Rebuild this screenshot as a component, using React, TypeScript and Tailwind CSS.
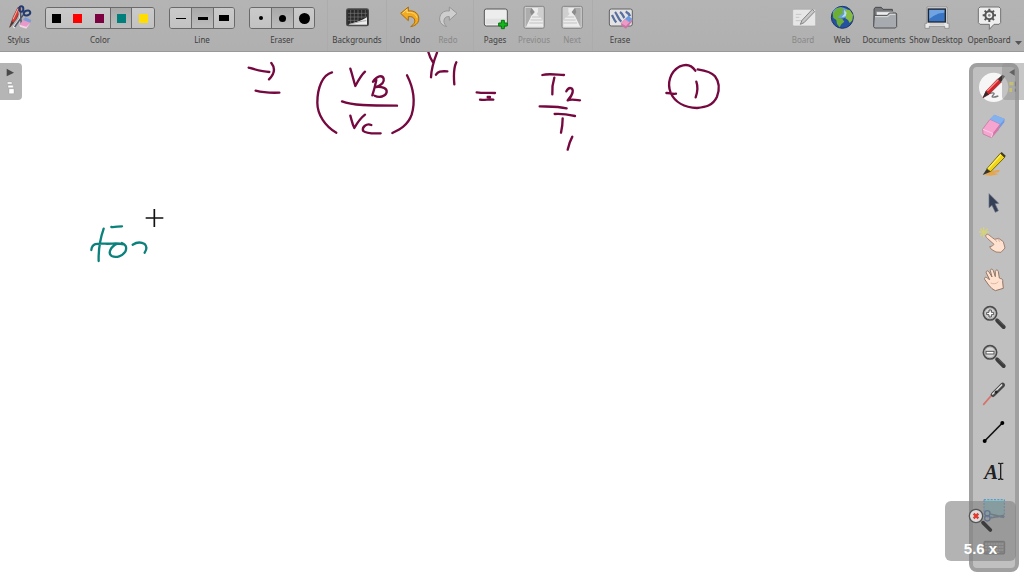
import React from 'react';

interface ToolButtonProps {
  label: string;
  width: string;
  disabled?: boolean;
  children: React.ReactNode;
}

const ToolButton: React.FC<ToolButtonProps> = ({ label, width, disabled, children }) => (
  <button
    type="button"
    disabled={disabled}
    className={`flex shrink-0 flex-col items-center gap-1 pt-1.5 ${width} ${disabled ? 'text-[#888888]' : 'text-[#404040]'}`}
  >
    <svg viewBox="0 0 84 72" className="h-6 w-7 overflow-visible" aria-hidden="true">
      {children}
    </svg>
    <span className="whitespace-nowrap text-[8px] leading-3">{label}</span>
  </button>
);

interface Choice {
  name: string;
  mark: string;
}

interface ChoiceGroupProps {
  label: string;
  choices: Choice[];
  selected: number;
  divided?: boolean;
}

const ChoiceGroup: React.FC<ChoiceGroupProps> = ({ label, choices, selected, divided = true }) => (
  <div role="group" aria-label={label} className="flex shrink-0 flex-col items-center pt-[7px] text-[#404040]">
    <div className="flex h-[22px] overflow-hidden rounded-[3px] border border-[#6a6a6a]">
      {choices.map((choice, idx) => (
        <button
          key={choice.name}
          type="button"
          aria-label={choice.name}
          aria-pressed={idx === selected}
          className={`flex items-center justify-center border-[#6a6a6a] ${divided ? 'w-5 not-last:w-[22px] not-last:border-r' : 'w-[22px] first:w-5'} ${
            idx === selected ? 'bg-linear-to-b from-[#a9a9a9] to-[#bcbcbc]' : 'bg-linear-to-b from-[#cacaca] to-[#c2c2c2]'
          } ${!divided && idx === selected ? 'border-x' : ''}`}
        >
          <span className={choice.mark} />
        </button>
      ))}
    </div>
    <span className="mt-[5px] text-[8px] leading-3">{label}</span>
  </div>
);

const colors: Choice[] = [
  { name: 'Black', mark: 'size-[9px] bg-black' },
  { name: 'Red', mark: 'size-[9px] bg-[#ff0000]' },
  { name: 'Purple', mark: 'size-[9px] bg-[#7d0041]' },
  { name: 'Teal', mark: 'size-[9px] bg-[#007f7c]' },
  { name: 'Yellow', mark: 'size-[9px] bg-[#ffdd00]' },
];

const lines: Choice[] = [
  { name: 'Fine line', mark: 'h-px w-2.5 bg-black' },
  { name: 'Medium line', mark: 'h-[3px] w-2.5 bg-black' },
  { name: 'Strong line', mark: 'h-1.5 w-2.5 bg-black' },
];

const erasers: Choice[] = [
  { name: 'Small eraser', mark: 'size-1 rounded-full bg-black' },
  { name: 'Medium eraser', mark: 'size-[7px] rounded-full bg-black' },
  { name: 'Large eraser', mark: 'size-[11px] rounded-full bg-black' },
];

const Separator = () => <div className="h-full w-px shrink-0 bg-[#acacac]" />;

const PageStairs = () => (
  <>
    <rect x="12" y="1" width="61" height="66" rx="5" fill="#cfcfcf" stroke="#858585" strokeWidth="3" />
    <path d="M36 6H54V18L50 24 69 42V62H18L34 30 44 19Z" fill="#ececec" />
    <path d="M17 6H34L43 18 34 29 18 62H17Z" fill="#adadad" />
    <path d="M34 6 44 18 35 28 30 18Z" fill="#8c8c8c" />
    <path d="M36 33H60M32 42H68M28 51H69" stroke="#c2c2c2" strokeWidth="3" />
  </>
);

const Toolbar = () => (
  <header className="z-10 flex h-[52px] shrink-0 items-stretch border-b border-[#999] bg-linear-to-b from-[#b4b4b4] to-[#b0b0b0]">
    <ToolButton label="Stylus" width="w-[37px]">
      <path d="M14 64 25 32 39 4 48 8 34 39Z" fill="#d93a32" stroke="#6b2d2c" strokeWidth="2" />
      <path d="M24 40 39 8" stroke="#f7b5ab" strokeWidth="3" />
      <path d="M14 64 20 46 27 50Z" fill="#483b3a" />
      <path d="M26 65 53 28M48 58 44 15" stroke="#eee" strokeWidth="7" />
      <path d="M29 63 55 26M49 57 46 17" stroke="#505868" strokeWidth="5" />
      <ellipse cx="49" cy="9" rx="6" ry="8" fill="none" stroke="#243b70" strokeWidth="6" />
      <ellipse cx="66" cy="21" rx="10" ry="7" fill="none" stroke="#243b70" strokeWidth="6" transform="rotate(-20 66 21)" />
      <path d="M43 56 55 42 76 50 64 67Z" fill="#e79ac9" />
      <path d="M54 42 61 34 79 42 76 50Z" fill="#7e9bd8" />
      <path d="M43 56 64 62 76 50 64 68 45 62Z" fill="#f4d5e7" />
    </ToolButton>
    <div className="ml-2 flex gap-3.5">
      <ChoiceGroup label="Color" choices={colors} selected={3} divided={false} />
      <ChoiceGroup label="Line" choices={lines} selected={1} />
      <ChoiceGroup label="Eraser" choices={erasers} selected={1} />
    </div>
    <div className="ml-3 flex">
      <Separator />
      <ToolButton label="Backgrounds" width="w-[58px]">
        <rect x="11" y="9" width="65" height="50" rx="5" fill="#292929" stroke="#4b4b4b" strokeWidth="4" />
        <path d="M23 12V52M34 12V49M45 12V44M56 12V38M67 12V32M15 22H72M15 33H72M15 43H46" stroke="#777" strokeWidth="2" />
        <path d="M15 56C32 51 54 46 72 34V56Z" fill="#eee" />
        <path d="M18 55C40 50 55 45 70 44" fill="none" stroke="#aaa" strokeWidth="3" />
      </ToolButton>
      <Separator />
    </div>
    <div className="ml-1 flex">
      <ToolButton label="Undo" width="w-[38px]">
        <path d="M14 22 37 3V15C57 12 71 25 68 43 66 53 57 60 44 62 55 54 59 47 55 39 52 33 46 31 37 32V44Z" fill="#f4aa20" stroke="#a76c0b" strokeWidth="3" strokeLinejoin="round" />
        <path d="M20 22 33 10V20C47 17 60 23 63 35" fill="none" stroke="#ffdc79" strokeWidth="3" />
      </ToolButton>
      <ToolButton label="Redo" width="w-[38px]" disabled>
        <path d="M69 22 46 3V15C28 12 15 25 17 42 19 53 27 59 38 62 30 53 28 47 31 39 34 33 39 31 46 32V43Z" fill="#cecece" stroke="#969696" strokeWidth="3" strokeLinejoin="round" />
      </ToolButton>
    </div>
    <div className="ml-1.5 flex">
      <Separator />
      <ToolButton label="Pages" width="w-[42px]">
        <rect x="10" y="9" width="69" height="51" rx="6" fill="#ededed" stroke="#565656" strokeWidth="3" />
        <path d="M14 38H75V54H14Z" fill="#e0e0e0" />
        <path d="M61 43H70V51H79V60H70V68H61V60H53V51H61Z" fill="#14b51d" stroke="#08740e" strokeWidth="3" strokeLinejoin="round" />
      </ToolButton>
      <ToolButton label="Previous" width="w-9" disabled>
        <PageStairs />
      </ToolButton>
      <ToolButton label="Next" width="w-10" disabled>
        <g transform="translate(85 0) scale(-1 1)">
          <PageStairs />
        </g>
      </ToolButton>
      <Separator />
      <ToolButton label="Erase" width="w-[54px]">
        <rect x="10" y="9" width="69" height="51" rx="6" fill="#e3e3e3" stroke="#626262" strokeWidth="3" />
        <path d="M18 27C22 35 25 44 31 49M27 18C34 25 36 39 46 47M42 18C51 24 52 32 55 36M59 17C66 20 69 24 72 31" fill="none" stroke="#596f9f" strokeWidth="7" />
        <path d="M45 52 57 39 71 49 60 65Z" fill="#ee9ac7" stroke="#a86a8f" strokeWidth="1" />
        <path d="M57 39 67 29 79 39 71 49Z" fill="#6c9ce0" />
        <path d="M45 52 60 60 79 40V46L60 68 46 59Z" fill="#cc74a5" />
      </ToolButton>
    </div>
    <nav aria-label="Modes" className="ml-auto flex">
      <ToolButton label="Board" width="w-[38px]" disabled>
        <rect x="11" y="10" width="69" height="50" rx="4" fill="#e6e6e6" stroke="#aaa" strokeWidth="2" />
        <path d="M20 25H37M20 34H31M20 44H42" stroke="#c6c6c6" strokeWidth="3" />
        <path d="M34 55 39 43 70 10 77 17 45 50Z" fill="#c7c7c7" stroke="#858585" strokeWidth="3" />
      </ToolButton>
      <ToolButton label="Web" width="w-10">
        <circle cx="43" cy="34" r="33" fill="#2451a0" stroke="#1e356a" strokeWidth="3" />
        <ellipse cx="38" cy="21" rx="24" ry="17" fill="#689edc" />
        <path d="M14 23 25 8 40 4 48 11 42 17 47 23 36 27 30 36 43 39 49 47 40 55 35 64 27 54 25 42 16 36Z" fill="#6dae34" />
        <path d="M54 10 66 13 75 27 73 43 65 51 60 42 52 37 55 27 49 22Z" fill="#87bd42" />
        <path d="M48 11 56 20 53 31 41 34 49 24Z" fill="#b9ddf1" />
      </ToolButton>
      <ToolButton label="Documents" width="w-[44px]">
        <path d="M12 62V9L16 4H34L39 10H67V62Z" fill="#75777a" stroke="#484a4d" strokeWidth="3" />
        <path d="M19 17H70V47H19Z" fill="#eee" stroke="#828282" strokeWidth="2" />
        <path d="M13 28H52L58 21H78L80 24V62L76 66H14L11 62Z" fill="#a7aaae" stroke="#4e5054" strokeWidth="3" />
        <path d="M15 32H54L60 25H76" fill="none" stroke="#ddd" strokeWidth="3" />
      </ToolButton>
      <ToolButton label="Show Desktop" width="w-[60px]">
        <path d="M15 3H75V52H81V67H68V61H22V67H9V52H15Z" fill="#e9e9e9" stroke="#818181" strokeWidth="2" />
        <rect x="19" y="9" width="51" height="39" fill="#3875c5" stroke="#21252c" strokeWidth="4" />
        <path d="M22 12H67V20C48 20 36 29 22 38Z" fill="#6fa3e2" />
        <path d="M23 54H67" stroke="#bbb" strokeWidth="3" />
      </ToolButton>
      <ToolButton label="OpenBoard" width="w-[46px]">
        <path d="M15 3H72L77 8V50L72 55H57L43 70V55H15L10 50V8Z" fill="#eee" stroke="#717171" strokeWidth="3" />
        <circle cx="43" cy="28" r="12" fill="none" stroke="#555" strokeWidth="6" />
        <path d="M43 8V15M43 41V48M23 28H30M56 28H63M29 14 34 19M52 37 57 42M57 14 52 19M34 37 29 42" stroke="#555" strokeWidth="6" />
        <circle cx="43" cy="28" r="4" fill="#888" />
      </ToolButton>
      <button type="button" aria-label="More" className="flex w-3 items-end justify-center pb-1.5">
        <svg viewBox="0 0 7 4" className="h-1 w-[7px]" aria-hidden="true">
          <path d="M0 0H7L3.5 4Z" fill="#555" />
        </svg>
      </button>
    </nav>
  </header>
);

const Magnifier: React.FC<{ children: React.ReactNode }> = ({ children }) => (
  <>
    <path d="M59 57 66 63" stroke="#777" strokeWidth="7" />
    <path d="M64 62 83 81" stroke="#3c3c3c" strokeWidth="12" strokeLinecap="round" />
    <path d="M67 60 85 77" stroke="#777" strokeWidth="2" />
    <circle cx="42" cy="40" r="20" fill="#d6d6d6" stroke="#4b4b4b" strokeWidth="5" />
    <circle cx="42" cy="40" r="16" fill="none" stroke="#999" strokeWidth="2" />
    {children}
  </>
);

const stylusTools: { name: string; icon: React.ReactNode }[] = [
  {
    name: 'Pen',
    icon: (
      <>
        <circle cx="53" cy="55" r="44" fill="#f6f6f6" />
        <path d="M31 77C48 69 61 70 51 79 44 86 52 86 67 81" fill="none" stroke="#777" strokeWidth="4" />
        <path d="M21 86 31 65 65 30 76 39 39 76Z" fill="#d6232b" stroke="#701c20" strokeWidth="2" />
        <path d="M65 30 79 17 87 22 75 40Z" fill="#403233" />
        <path d="M34 65 67 32" stroke="#fa8b88" strokeWidth="4" />
        <path d="M21 86 29 67 38 76Z" fill="#2c2c2c" />
      </>
    ),
  },
  {
    name: 'Eraser',
    icon: (
      <>
        <path d="M20 63 42 34 73 48 51 79 46 89 21 78Z" fill="#f5a5cf" stroke="#b27396" strokeWidth="2" />
        <path d="M42 34 55 20 86 33 85 43 64 69 73 48Z" fill="#7099e0" />
        <path d="M42 34 55 20 86 33 73 48Z" fill="#84b2ef" />
        <path d="M51 75 73 48 67 67 47 90Z" fill="#d576a8" />
        <path d="M21 64 50 76 46 88" fill="none" stroke="#ffcee5" strokeWidth="3" />
      </>
    ),
  },
  {
    name: 'Marker',
    icon: (
      <>
        <path d="M24 87 46 75 71 71 69 79 54 80 68 85 44 89Z" fill="#e6a64c" />
        <path d="M32 69 73 22 86 34 44 77Z" fill="#efd516" stroke="#786809" strokeWidth="3" />
        <path d="M37 68 75 26" stroke="#fff171" strokeWidth="4" />
        <path d="M73 22 77 18 89 29 86 35Z" fill="#403b22" />
        <path d="M20 87 32 69 44 77Z" fill="#363427" />
      </>
    ),
  },
  {
    name: 'Select',
    icon: <path d="M39 26 68 55 57 56 67 77 58 82 48 61 39 68Z" fill="#354057" stroke="#666f83" strokeWidth="2" />,
  },
  {
    name: 'Interact',
    icon: (
      <>
        <path d="M23 13V43M9 27H39M13 17 35 38M35 17 13 38" stroke="#d5d27c" strokeWidth="4" />
        <path d="M31 35C36 31 40 38 56 49L68 46 82 56 87 75 75 88 60 87 46 79 41 71 49 69 54 64 34 46C29 42 28 38 31 35Z" fill="#ffe1cf" stroke="#a17f70" strokeWidth="3" />
        <path d="M57 50 63 57M66 48 71 56" stroke="#bd9786" strokeWidth="2" />
      </>
    ),
  },
  {
    name: 'Scroll page',
    icon: (
      <>
        <path d="M38 69 26 52C24 45 30 44 35 49L41 53 31 33C29 27 35 24 39 30L48 45 43 26C43 20 50 20 52 26L58 44 58 28C60 22 66 23 67 29L70 48 74 50C80 50 81 54 80 60L82 79 58 86 48 80Z" fill="#ffe1cf" stroke="#937666" strokeWidth="3" />
        <path d="M44 63C52 67 61 66 67 59" fill="none" stroke="#ca9e89" strokeWidth="2" />
      </>
    ),
  },
  {
    name: 'Zoom in',
    icon: (
      <Magnifier>
        <path d="M39 30H46V37H53V44H46V51H39V44H32V37H39Z" fill="#fff" stroke="#555" strokeWidth="3" />
      </Magnifier>
    ),
  },
  {
    name: 'Zoom out',
    icon: (
      <Magnifier>
        <rect x="30" y="37" width="24" height="8" fill="#fff" stroke="#555" strokeWidth="3" />
      </Magnifier>
    ),
  },
  {
    name: 'Laser pointer',
    icon: (
      <>
        <path d="M23 82 49 52" stroke="#d8716b" strokeWidth="5" strokeLinecap="round" />
        <path d="M51 53 80 24" stroke="#474747" strokeWidth="14" strokeLinecap="round" />
        <path d="M50 51 77 24" stroke="#ddd" strokeWidth="5" strokeLinecap="round" />
        <path d="M58 48 63 42" stroke="#222" strokeWidth="8" />
      </>
    ),
  },
  {
    name: 'Draw line',
    icon: (
      <>
        <path d="M26 78 79 24" stroke="#111" strokeWidth="5" />
        <circle cx="26" cy="78" r="6" />
        <circle cx="79" cy="24" r="6" />
      </>
    ),
  },
  {
    name: 'Text',
    icon: (
      <>
        <text x="25" y="74" className="fill-[#222] font-['Liberation_Serif',serif] text-[62px] font-bold italic">A</text>
        <path d="M66 28H71L74 31 77 28H82M74 31V73M66 76H71L74 73 77 76H82" fill="none" stroke="#222" strokeWidth="4" />
      </>
    ),
  },
  {
    name: 'Capture',
    icon: (
      <>
        <rect x="24" y="23" width="61" height="52" fill="#8fc6cb" stroke="#4f91cc" strokeWidth="3" strokeDasharray="6 4" />
        <path d="M43 66 84 76M43 78 84 70" stroke="#60778b" strokeWidth="5" />
        <circle cx="34" cy="64" r="8" fill="none" stroke="#3e63a3" strokeWidth="4" />
        <circle cx="34" cy="79" r="8" fill="none" stroke="#3e63a3" strokeWidth="4" />
      </>
    ),
  },
  {
    name: 'Keyboard',
    icon: (
      <>
        <rect x="24" y="31" width="62" height="38" rx="3" fill="#858585" stroke="#666" strokeWidth="3" />
        <path d="M28 39H82M28 48H82M28 57H82" stroke="#bbb" strokeWidth="4" strokeDasharray="6 2" />
        <path d="M38 64H70" stroke="#ccc" strokeWidth="3" />
      </>
    ),
  },
];

const StylusPalette = () => (
  <aside aria-label="Stylus tools" className="absolute top-[11px] right-[5px] bottom-1 flex w-[50px] flex-col rounded-lg border-4 border-[#a0a0a0] bg-[#c0c0c0] pt-px">
    {stylusTools.map((tool) => (
      <button key={tool.name} type="button" aria-label={tool.name} className="flex min-h-0 flex-1 items-center justify-center">
        <svg viewBox="0 0 108 108" className="size-9 shrink-0 overflow-visible" aria-hidden="true">
          {tool.icon}
        </svg>
      </button>
    ))}
  </aside>
);

// Handwritten ink plus the crosshair pointer, in board coordinates
const Ink = () => (
  <svg viewBox="0 0 1024 524" className="block w-full" aria-label="Board ink">
    <g fill="none" stroke="#74083f" strokeWidth="7" strokeLinecap="round" strokeLinejoin="round">
      <g transform="translate(235 -2) scale(0.33333)">
        <path d="M41 53C62 59 82 65 103 66M109 39C121 54 118 72 102 88M62 122C85 128 108 129 133 128" />
        <path d="M291 67C263 74 247 113 247 158 247 194 271 229 304 248" />
        <path d="M346 56C352 74 356 92 361 108 370 91 378 76 390 65" />
        <path d="M424 90C421 105 417 121 412 136M414 95C426 77 442 74 446 86 449 99 434 107 423 111 442 109 457 115 455 127 452 140 432 144 419 137" />
        <path d="M321 154C351 166 402 167 486 167" />
        <path d="M346 197C350 210 352 223 358 234 367 218 377 204 390 194M409 225C394 219 381 231 384 242 393 252 419 250 437 250" />
        <path d="M516 76C535 113 541 157 530 194 519 226 493 239 472 249" />
        <path d="M580 6C583 17 588 29 594 37M606 8C597 31 589 55 588 82M603 74C609 64 616 63 637 64M664 37C655 55 656 81 658 103" />
        <path d="M725 127C743 130 762 128 780 129M735 149C750 151 761 147 775 149M758 141H765" />
      </g>
      <g transform="translate(500 -2) scale(0.33333)">
        <path d="M127 75C145 70 169 74 192 75M163 83C158 99 156 116 157 133" />
        <path d="M199 124C207 108 220 113 218 126 216 138 208 146 203 151 217 146 225 151 240 151" />
        <path d="M119 169C145 170 173 169 200 175M164 192C185 190 206 194 225 198M188 205C188 222 186 235 183 248M217 260C210 273 206 286 203 299" />
        <path d="M499 129C509 128 517 133 528 131M586 62C574 44 556 42 540 49 509 66 501 101 512 128 524 155 552 173 591 174 616 171 638 168 651 140 660 116 658 96 645 79 635 66 613 61 593 58" />
        <path d="M589 95C594 109 592 128 587 142" />
      </g>
    </g>
    <g transform="translate(80 148) scale(0.33333)" fill="none" strokeLinecap="round">
      <path
        d="M71 86C61 115 55 148 56 183M34 150C36 129 51 130 75 131 97 132 113 128 131 133M112 131C91 140 83 160 95 168 109 175 127 168 136 155 142 142 136 132 126 129M94 81C106 82 114 79 126 79M158 134C169 127 182 125 194 132 201 139 200 149 194 158"
        stroke="#0b817c"
        strokeWidth="7"
      />
      <path d="M197 54H250M223 27V81" stroke="#111" strokeWidth="5" strokeLinecap="butt" />
    </g>
  </svg>
);

export default function App() {
  return (
    <div className="flex h-screen flex-col overflow-hidden bg-white font-['Noto_Sans',sans-serif]">
      <Toolbar />
      <main className="relative min-h-0 flex-1">
        <Ink />
        <button
          type="button"
          aria-label="Open page navigator"
          className="absolute top-[11px] left-0 flex h-[37px] w-[22px] items-center justify-center rounded-r bg-[#b5b5b5]"
        >
          <svg viewBox="0 0 66 111" className="h-[37px] w-[22px]" aria-hidden="true">
            <path d="M20 17V40L42 29Z" fill="#4a4a4a" />
            <path d="M22 57H36V63H22ZM24 67H40V74H24ZM27 77H42V92H27Z" fill="#fff" stroke="#8b8b8b" strokeWidth="1" />
          </svg>
        </button>
        <StylusPalette />
        <button
          type="button"
          aria-label="Open library"
          className="absolute top-[11px] right-0 flex h-[37px] w-[22px] items-center justify-center rounded-l bg-[#909090]/50"
        >
          <svg viewBox="0 0 66 111" className="h-[37px] w-[22px]" aria-hidden="true">
            <path d="M38 18V38L22 28Z" fill="#626262" />
            <path d="M22 57H34V67H22ZM22 75H30V87H22Z" fill="#c6bf72" />
            <path d="M40 56V70M40 77V86" stroke="#777" strokeWidth="3" />
          </svg>
        </button>
        <div className="absolute right-2 bottom-[15px] flex h-[60px] w-[71px] flex-col items-center justify-between rounded-md bg-[#808080]/60 pb-0.5">
          <svg viewBox="0 0 108 108" className="size-9" aria-hidden="true">
            <path d="M60 65 82 87" stroke="#3c3c3c" strokeWidth="11" strokeLinecap="round" />
            <circle cx="39" cy="45" r="20" fill="#ddd" stroke="#555" strokeWidth="4" />
            <path d="M32 38 46 52M46 38 32 52" stroke="#e13a30" strokeWidth="7" />
          </svg>
          <output className="font-['Liberation_Sans',sans-serif] text-[15px] leading-5 font-bold text-white">5.6 x</output>
        </div>
      </main>
    </div>
  );
}
